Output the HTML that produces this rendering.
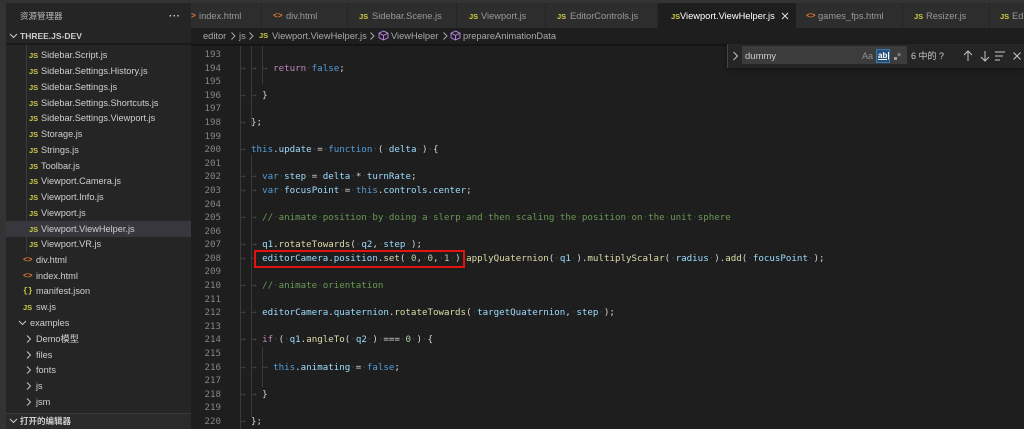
<!DOCTYPE html>
<html><head><meta charset="utf-8">
<style>
html,body{margin:0;padding:0;background:#1e1e1e}
#r{position:relative;width:1024px;height:429px;overflow:hidden;background:#1e1e1e;font-family:"Liberation Sans","Noto Sans CJK SC",sans-serif;font-size:9.3px;color:#ccc}
#r div,#r span.a,#r svg{position:absolute}
.t{white-space:nowrap;line-height:14px;height:14px}
.tab{top:3px;height:25px;background:#2d2d2d;border-right:1px solid #252526;box-sizing:border-box}
.tt{top:9px;color:#9a9a9a}
.j{font-weight:bold;color:#cbcb41;font-size:7.5px;font-family:"Liberation Sans",sans-serif;white-space:nowrap;line-height:14px;height:14px;margin-top:2px}
.h{font-weight:bold;color:#e37933;font-size:8px;white-space:nowrap;line-height:14px;height:14px;font-family:"Liberation Mono",monospace;margin-top:1px}
.f{color:#cfcfcf;white-space:nowrap;line-height:14px;height:14px;font-size:9.2px}
.n{left:195px;width:26px;text-align:right;color:#858585;font:9.17px/14px "DejaVu Sans Mono",monospace;height:14px;margin-top:1px}
.c{left:240px;font:9.17px/14px "DejaVu Sans Mono",monospace;white-space:pre;color:#d4d4d4;height:14px;margin-top:1px}
.c b{font-weight:normal;color:#454545}
.c u{text-decoration:none;color:#569cd6}
.c s{text-decoration:none;color:#9cdcfe}
.c em{font-style:normal;color:#dcdcaa}
.c q{quotes:none;color:#c586c0}
.c q:before,.c q:after{content:none}
.c i{font-style:normal;color:#6a9955}
.c i b{color:#3e4a38}
.c a{color:#b5cea8}
.g{width:1px;background:#3a3a3a}
</style></head><body><div id="r">

<div style="left:0;top:0;width:1024px;height:3px;background:#333"></div>
<div style="left:191px;top:3px;width:833px;height:25px;background:#252526"></div>

<div class="tab" style="left:191px;width:71px"></div>
<div class="h" style="left:191px;top:9px">&gt;</div><div class="t tt" style="left:199px">index.html</div>
<div class="tab" style="left:262px;width:86px"></div>
<div class="h" style="left:273px;top:9px">&lt;&gt;</div><div class="t tt" style="left:286px">div.html</div>
<div class="tab" style="left:348px;width:109px"></div>
<div class="j" style="left:359px;top:8px">JS</div><div class="t tt" style="left:372px">Sidebar.Scene.js</div>
<div class="tab" style="left:457px;width:89px"></div>
<div class="j" style="left:469px;top:8px">JS</div><div class="t tt" style="left:481px">Viewport.js</div>
<div class="tab" style="left:546px;width:112px"></div>
<div class="j" style="left:557px;top:8px">JS</div><div class="t tt" style="left:570px">EditorControls.js</div>
<div style="left:658px;top:3px;width:138px;height:25px;background:#1e1e1e"></div>
<div class="j" style="left:671px;top:8px">JS</div><div class="t" style="left:680px;top:9px;color:#fff">Viewport.ViewHelper.js</div>
<svg style="left:780px;top:11px" width="10" height="10" viewBox="0 0 10 10"><path d="M2 2L8 8M8 2L2 8" stroke="#ddd" stroke-width="1"/></svg>
<div class="tab" style="left:796px;width:107px"></div>
<div class="h" style="left:806px;top:9px">&lt;&gt;</div><div class="t tt" style="left:818px">games_fps.html</div>
<div class="tab" style="left:903px;width:87px"></div>
<div class="j" style="left:914px;top:8px">JS</div><div class="t tt" style="left:926px">Resizer.js</div>
<div class="tab" style="left:990px;width:34px;border:0"></div>
<div class="j" style="left:1000px;top:8px">JS</div><div class="t tt" style="left:1012px">Edi</div>

<div class="t" style="left:203px;top:29px;color:#a9a9a9">editor</div>
<svg style="left:229px;top:31px" width="8" height="10" viewBox="0 0 8 10"><path d="M2.500 1.500L6 5L2.500 8.500" fill="none" stroke="#a9a9a9"/></svg>
<div class="t" style="left:239px;top:29px;color:#a9a9a9">js</div>
<svg style="left:247px;top:31px" width="8" height="10" viewBox="0 0 8 10"><path d="M2.500 1.500L6 5L2.500 8.500" fill="none" stroke="#a9a9a9"/></svg>
<div class="j" style="left:259px;top:27px">JS</div>
<div class="t" style="left:272px;top:29px;color:#a9a9a9">Viewport.ViewHelper.js</div>
<svg style="left:368px;top:31px" width="8" height="10" viewBox="0 0 8 10"><path d="M2.500 1.500L6 5L2.500 8.500" fill="none" stroke="#a9a9a9"/></svg>
<svg style="left:378px;top:30px" width="11" height="11" viewBox="0 0 11 11"><path d="M5.500 1L10 3.200V7.800L5.500 10L1 7.800V3.200ZM1 3.200L5.500 5.500L10 3.200M5.500 5.500V10" fill="none" stroke="#b180d7" stroke-width="1"/></svg>
<div class="t" style="left:391px;top:29px;color:#a9a9a9">ViewHelper</div>
<svg style="left:441px;top:31px" width="8" height="10" viewBox="0 0 8 10"><path d="M2.500 1.500L6 5L2.500 8.500" fill="none" stroke="#a9a9a9"/></svg>
<svg style="left:450px;top:30px" width="11" height="11" viewBox="0 0 11 11"><path d="M5.500 1L10 3.200V7.800L5.500 10L1 7.800V3.200ZM1 3.200L5.500 5.500L10 3.200M5.500 5.500V10" fill="none" stroke="#b180d7" stroke-width="1"/></svg>
<div class="t" style="left:463px;top:29px;color:#a9a9a9">prepareAnimationData</div>

<div class="g" style="left:240px;top:44px;height:385px"></div>
<div class="g" style="left:251px;top:44px;height:82px"></div>
<div class="g" style="left:251px;top:155px;height:262px"></div>
<div class="g" style="left:262px;top:44px;height:40px"></div>
<div class="g" style="left:262px;top:347px;height:40px"></div>

<div style="left:240px;top:44px;width:60px;height:4px;overflow:hidden"><div class="c" style="left:0;top:-11px;margin:0"><b>→ → </b>} <q>else</q> {</div></div>

<div class="n" style="top:47px">193</div><div class="n" style="top:60.6px">194</div><div class="n" style="top:74.2px">195</div><div class="n" style="top:87.8px">196</div><div class="n" style="top:101.4px">197</div><div class="n" style="top:115px">198</div><div class="n" style="top:128.5px">199</div><div class="n" style="top:142.1px">200</div><div class="n" style="top:155.7px">201</div><div class="n" style="top:169.3px">202</div><div class="n" style="top:182.9px">203</div><div class="n" style="top:196.5px">204</div><div class="n" style="top:210.1px">205</div><div class="n" style="top:223.7px">206</div><div class="n" style="top:237.3px">207</div><div class="n" style="top:250.9px">208</div><div class="n" style="top:264.4px">209</div><div class="n" style="top:278px">210</div><div class="n" style="top:291.6px">211</div><div class="n" style="top:305.2px">212</div><div class="n" style="top:318.8px">213</div><div class="n" style="top:332.4px">214</div><div class="n" style="top:346px">215</div><div class="n" style="top:359.6px">216</div><div class="n" style="top:373.2px">217</div><div class="n" style="top:386.8px">218</div><div class="n" style="top:400.3px">219</div><div class="n" style="top:413.9px">220</div>

<div class="c" style="top:60.6px"><b>→ → → </b><q>return</q><b>·</b><u>false</u>;</div>
<div class="c" style="top:87.8px"><b>→ → </b>}</div>
<div class="c" style="top:115px"><b>→ </b>};</div>
<div class="c" style="top:142.1px"><b>→ </b><u>this</u>.<s>update</s><b>·</b>=<b>·</b><u>function</u><b>·</b>(<b>·</b><s>delta</s><b>·</b>)<b>·</b>{</div>
<div class="c" style="top:169.3px"><b>→ → </b><u>var</u><b>·</b><s>step</s><b>·</b>=<b>·</b><s>delta</s><b>·</b>*<b>·</b><s>turnRate</s>;</div>
<div class="c" style="top:182.9px"><b>→ → </b><u>var</u><b>·</b><s>focusPoint</s><b>·</b>=<b>·</b><u>this</u>.<s>controls</s>.<s>center</s>;</div>
<div class="c" style="top:210.1px"><b>→ → </b><i>//<b>·</b>animate<b>·</b>position<b>·</b>by<b>·</b>doing<b>·</b>a<b>·</b>slerp<b>·</b>and<b>·</b>then<b>·</b>scaling<b>·</b>the<b>·</b>position<b>·</b>on<b>·</b>the<b>·</b>unit<b>·</b>sphere</i></div>
<div class="c" style="top:237.3px"><b>→ → </b><s>q1</s>.<em>rotateTowards</em>(<b>·</b><s>q2</s>,<b>·</b><s>step</s><b>·</b>);</div>
<div class="c" style="top:250.9px"><b>→ → </b><s>editorCamera</s>.<s>position</s>.<em>set</em>(<b>·</b><a>0</a>,<b>·</b><a>0</a>,<b>·</b><a>1</a><b>·</b>) <em>applyQuaternion</em>(<b>·</b><s>q1</s><b>·</b>).<em>multiplyScalar</em>(<b>·</b><s>radius</s><b>·</b>).<em>add</em>(<b>·</b><s>focusPoint</s><b>·</b>);</div>
<div class="c" style="top:278px"><b>→ → </b><i>//<b>·</b>animate<b>·</b>orientation</i></div>
<div class="c" style="top:305.2px"><b>→ → </b><s>editorCamera</s>.<s>quaternion</s>.<em>rotateTowards</em>(<b>·</b><s>targetQuaternion</s>,<b>·</b><s>step</s><b>·</b>);</div>
<div class="c" style="top:332.4px"><b>→ → </b><q>if</q><b>·</b>(<b>·</b><s>q1</s>.<em>angleTo</em>(<b>·</b><s>q2</s><b>·</b>)<b>·</b>===<b>·</b><a>0</a><b>·</b>)<b>·</b>{</div>
<div class="c" style="top:359.6px"><b>→ → → </b><u>this</u>.<s>animating</s><b>·</b>=<b>·</b><u>false</u>;</div>
<div class="c" style="top:386.8px"><b>→ → </b>}</div>
<div class="c" style="top:413.9px"><b>→ </b>};</div>

<div style="left:254px;top:250px;width:207px;height:14px;border:2px solid #e3140f"></div>

<div style="left:191px;top:44px;width:833px;height:2px;background:#141414"></div>

<div style="left:727px;top:44px;width:297px;height:24px;background:#252526;box-shadow:0 1px 4px #111"></div>
<div style="left:727px;top:44px;width:1px;height:24px;background:#454545"></div>
<svg style="left:731px;top:50px" width="9" height="12" viewBox="0 0 9 12"><path d="M2.500 2L6.500 6L2.500 10" fill="none" stroke="#c5c5c5"/></svg>
<div style="left:742px;top:46px;width:165px;height:18px;background:#3c3c3c"></div>
<div class="t" style="left:745px;top:50px;color:#ccc;font-size:9.500px">dummy</div>
<div class="t" style="left:862px;top:49px;color:#8f8f8f;font-size:9px">Aa</div>
<div style="left:876px;top:49px;width:12px;height:12px;background:#264f78;border:1px solid #3a7ab0"></div>
<div class="t" style="left:878px;top:49px;color:#fff;font-size:8px;font-weight:bold;text-decoration:underline">ab|</div>
<div style="left:894px;top:57px;width:3px;height:3px;background:#9a9a9a"></div>
<div class="t" style="left:897px;top:50px;color:#9a9a9a;font-size:11px">*</div>
<div class="t" style="left:911px;top:49px;color:#ccc;font-size:9px">6 中的 ?</div>
<svg style="left:962px;top:49px" width="12" height="14" viewBox="0 0 12 14"><path d="M6 12V2M2 6L6 2L10 6" fill="none" stroke="#c5c5c5"/></svg>
<svg style="left:979px;top:49px" width="12" height="14" viewBox="0 0 12 14"><path d="M6 2V12M2 8L6 12L10 8" fill="none" stroke="#c5c5c5"/></svg>
<svg style="left:994px;top:49px" width="12" height="14" viewBox="0 0 12 14"><path d="M1 3H11M1 7H9M1 11H6" fill="none" stroke="#c5c5c5"/></svg>
<svg style="left:1011px;top:50px" width="12" height="12" viewBox="0 0 12 12"><path d="M2.500 2.500L9.500 9.500M9.500 2.500L2.500 9.500" fill="none" stroke="#c5c5c5"/></svg>

<div style="left:0;top:0;width:6px;height:429px;background:#333"></div>
<div style="left:6px;top:3px;width:185px;height:426px;background:#252526"></div>
<div class="t" style="left:20px;top:9px;font-size:8.500px;color:#bbb">资源管理器</div>
<div class="t" style="left:169px;top:10px;font-size:10px;color:#ccc;font-weight:bold;letter-spacing:.5px">···</div>
<svg style="left:8px;top:31px" width="11" height="10" viewBox="0 0 11 10"><path d="M2 3L5.500 6.500L9 3" fill="none" stroke="#ccc"/></svg>
<div class="t" style="left:20px;top:29px;font-size:8.500px;font-weight:bold;color:#ccc">THREE.JS-DEV</div>
<div style="left:6px;top:43px;width:185px;height:2px;background:#1b1b1b"></div>
<div style="left:26px;top:45px;width:1px;height:208px;background:#3c3c3c"></div>

<div style="left:6px;top:221px;width:185px;height:16px;background:#37373d"></div>

<div class="j" style="left:29px;top:47px">JS</div><div class="f" style="left:41px;top:48px">Sidebar.Script.js</div>
<div class="j" style="left:29px;top:63px">JS</div><div class="f" style="left:41px;top:64px">Sidebar.Settings.History.js</div>
<div class="j" style="left:29px;top:79px">JS</div><div class="f" style="left:41px;top:80px">Sidebar.Settings.js</div>
<div class="j" style="left:29px;top:95px">JS</div><div class="f" style="left:41px;top:96px">Sidebar.Settings.Shortcuts.js</div>
<div class="j" style="left:29px;top:110px">JS</div><div class="f" style="left:41px;top:111px">Sidebar.Settings.Viewport.js</div>
<div class="j" style="left:29px;top:126px">JS</div><div class="f" style="left:41px;top:127px">Storage.js</div>
<div class="j" style="left:29px;top:142px">JS</div><div class="f" style="left:41px;top:143px">Strings.js</div>
<div class="j" style="left:29px;top:158px">JS</div><div class="f" style="left:41px;top:159px">Toolbar.js</div>
<div class="j" style="left:29px;top:173px">JS</div><div class="f" style="left:41px;top:174px">Viewport.Camera.js</div>
<div class="j" style="left:29px;top:189px">JS</div><div class="f" style="left:41px;top:190px">Viewport.Info.js</div>
<div class="j" style="left:29px;top:205px">JS</div><div class="f" style="left:41px;top:206px">Viewport.js</div>
<div class="j" style="left:29px;top:221px">JS</div><div class="f" style="left:41px;top:222px">Viewport.ViewHelper.js</div>
<div class="j" style="left:29px;top:236px">JS</div><div class="f" style="left:41px;top:237px">Viewport.VR.js</div>
<div class="h" style="left:23px;top:253px">&lt;&gt;</div><div class="f" style="left:36px;top:253px">div.html</div>
<div class="h" style="left:23px;top:269px">&lt;&gt;</div><div class="f" style="left:36px;top:269px">index.html</div>
<div class="h" style="left:23px;top:284px;color:#cbcb41">{}</div><div class="f" style="left:36px;top:284px">manifest.json</div>
<div class="j" style="left:23px;top:299px">JS</div><div class="f" style="left:36px;top:300px">sw.js</div>
<svg style="left:17px;top:318px" width="11" height="10" viewBox="0 0 11 10"><path d="M2 3L5.500 6.500L9 3" fill="none" stroke="#c5c5c5"/></svg>
<div class="f" style="left:30px;top:316px">examples</div>
<svg style="left:24px;top:334px" width="9" height="10" viewBox="0 0 9 10"><path d="M3 1.500L6.500 5L3 8.500" fill="none" stroke="#c5c5c5"/></svg>
<div class="f" style="left:36px;top:332px">Demo模型</div>
<svg style="left:24px;top:350px" width="9" height="10" viewBox="0 0 9 10"><path d="M3 1.500L6.500 5L3 8.500" fill="none" stroke="#c5c5c5"/></svg>
<div class="f" style="left:36px;top:348px">files</div>
<svg style="left:24px;top:365px" width="9" height="10" viewBox="0 0 9 10"><path d="M3 1.500L6.500 5L3 8.500" fill="none" stroke="#c5c5c5"/></svg>
<div class="f" style="left:36px;top:363px">fonts</div>
<svg style="left:24px;top:381px" width="9" height="10" viewBox="0 0 9 10"><path d="M3 1.500L6.500 5L3 8.500" fill="none" stroke="#c5c5c5"/></svg>
<div class="f" style="left:36px;top:379px">js</div>
<svg style="left:24px;top:397px" width="9" height="10" viewBox="0 0 9 10"><path d="M3 1.500L6.500 5L3 8.500" fill="none" stroke="#c5c5c5"/></svg>
<div class="f" style="left:36px;top:395px">jsm</div>
<div style="left:6px;top:413px;width:185px;height:16px;background:#2a2a2b;border-top:1px solid #3a3a3a;box-sizing:border-box"></div>
<svg style="left:8px;top:416px" width="11" height="10" viewBox="0 0 11 10"><path d="M2 3L5.500 6.500L9 3" fill="none" stroke="#ccc"/></svg>
<div class="t" style="left:20px;top:414px;font-size:8.500px;color:#ccc;font-weight:bold">打开的编辑器</div>

</div></body></html>
